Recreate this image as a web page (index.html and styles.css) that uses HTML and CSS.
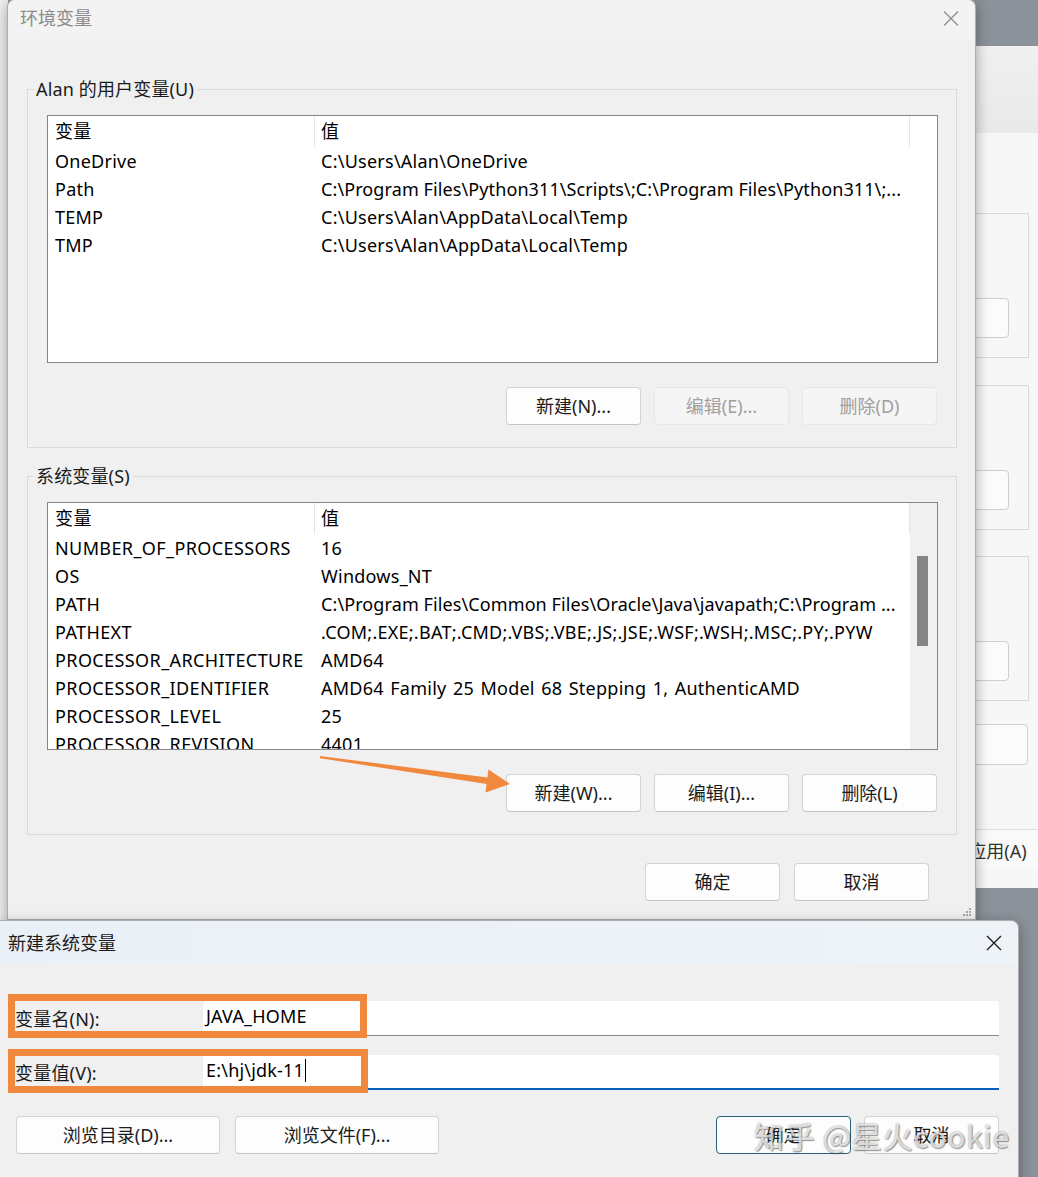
FILE: index.html
```html
<!DOCTYPE html>
<html lang="zh-CN">
<head>
<meta charset="utf-8">
<title>环境变量</title>
<link rel="stylesheet" href="styles.css">
</head>
<body>
<div class="desktop">
  <div class="bgwin-left"></div>
  <div class="bgwin">
    <div class="bgwin-head"></div>
    <div class="bgwin-body">
      <div class="bggroup g1"><div class="bgbtn"></div></div>
      <div class="bggroup g2"><div class="bgbtn"></div></div>
      <div class="bggroup g3"><div class="bgbtn"></div></div>
      <div class="bgbtn wide"></div>
      <div class="bgapply">应用(A)</div>
    </div>
  </div>

  <div class="dialog envdlg">
    <div class="titlebar">
      <span class="title">环境变量</span>
      <svg class="close" width="16" height="17" viewBox="0 0 16 17"><path d="M1 1.5L15 15.5M15 1.5L1 15.5" stroke="#8e8e8e" stroke-width="1.3" fill="none"/></svg>
    </div>
    <div class="dlgbody">
      <div class="group">
        <div class="legend">Alan 的用户变量(U)</div>
        <div class="list">
          <div class="lrow lhead"><span class="c1">变量</span><span class="c2">值</span></div>
          <div class="lrow"><span class="c1">OneDrive</span><span class="c2">C:\Users\Alan\OneDrive</span></div>
          <div class="lrow"><span class="c1">Path</span><span class="c2 tight">C:\Program Files\Python311\Scripts\;C:\Program Files\Python311\;...</span></div>
          <div class="lrow"><span class="c1">TEMP</span><span class="c2">C:\Users\Alan\AppData\Local\Temp</span></div>
          <div class="lrow"><span class="c1">TMP</span><span class="c2">C:\Users\Alan\AppData\Local\Temp</span></div>
        </div>
        <div class="btnrow">
          <div class="btn">新建(N)...</div>
          <div class="btn disabled">编辑(E)...</div>
          <div class="btn disabled">删除(D)</div>
        </div>
      </div>

      <div class="group">
        <div class="legend">系统变量(S)</div>
        <div class="list sys">
          <div class="lbody">
            <div class="lrow lhead"><span class="c1">变量</span><span class="c2">值</span></div>
            <div class="lrow"><span class="c1">NUMBER_OF_PROCESSORS</span><span class="c2">16</span></div>
            <div class="lrow"><span class="c1">OS</span><span class="c2">Windows_NT</span></div>
            <div class="lrow"><span class="c1">PATH</span><span class="c2 tight">C:\Program Files\Common Files\Oracle\Java\javapath;C:\Program ...</span></div>
            <div class="lrow"><span class="c1">PATHEXT</span><span class="c2">.COM;.EXE;.BAT;.CMD;.VBS;.VBE;.JS;.JSE;.WSF;.WSH;.MSC;.PY;.PYW</span></div>
            <div class="lrow"><span class="c1">PROCESSOR_ARCHITECTURE</span><span class="c2">AMD64</span></div>
            <div class="lrow"><span class="c1">PROCESSOR_IDENTIFIER</span><span class="c2">AMD64 Family 25 Model 68 Stepping 1, AuthenticAMD</span></div>
            <div class="lrow"><span class="c1">PROCESSOR_LEVEL</span><span class="c2">25</span></div>
            <div class="lrow"><span class="c1">PROCESSOR_REVISION</span><span class="c2">4401</span></div>
          </div>
          <div class="scrollbar"><div class="thumb"></div></div>
        </div>
        <div class="btnrow">
          <div class="btn">新建(W)...</div>
          <div class="btn">编辑(I)...</div>
          <div class="btn">删除(L)</div>
        </div>
      </div>

      <div class="okrow">
        <div class="btn">确定</div>
        <div class="btn">取消</div>
      </div>
    </div>
    <svg class="grip" width="10" height="10" viewBox="0 0 10 10"><g fill="#a8a8a8"><rect x="7" y="1" width="2" height="2"/><rect x="4" y="4" width="2" height="2"/><rect x="7" y="4" width="2" height="2"/><rect x="1" y="7" width="2" height="2"/><rect x="4" y="7" width="2" height="2"/><rect x="7" y="7" width="2" height="2"/></g></svg>
  </div>

  <div class="dialog newdlg">
    <div class="titlebar nt">
      <span class="title">新建系统变量</span>
      <svg class="close" width="16" height="16" viewBox="0 0 16 16"><path d="M1 1L15 15M15 1L1 15" stroke="#1a1a1a" stroke-width="1.3" fill="none"/></svg>
    </div>
    <div class="newbody">
      <div class="field">
        <div class="flabel">变量名(N):</div>
        <div class="finput">JAVA_HOME</div>
      </div>
      <div class="field">
        <div class="flabel">变量值(V):</div>
        <div class="finput focus">E:\hj\jdk-11<span class="caret"></span></div>
      </div>
      <div class="newbtns">
        <div class="btn wide">浏览目录(D)...</div>
        <div class="btn wide">浏览文件(F)...</div>
        <div class="spacer"></div>
        <div class="rbtns">
          <div class="btn default">确定</div>
          <div class="btn">取消</div>
        </div>
      </div>
    </div>
    <svg class="grip" width="10" height="10" viewBox="0 0 10 10"><g fill="#a8a8a8"><rect x="7" y="1" width="2" height="2"/><rect x="4" y="4" width="2" height="2"/><rect x="7" y="4" width="2" height="2"/><rect x="1" y="7" width="2" height="2"/><rect x="4" y="7" width="2" height="2"/><rect x="7" y="7" width="2" height="2"/></g></svg>
  </div>

  <svg class="annot" width="1038" height="1177" viewBox="0 0 1038 1177">
    <polygon points="320,756 487.4,777.4 488.5,769.5 510,784 485.5,792.5 486.6,784 320,758.2" fill="#f0893d"/>
  </svg>
  <div class="hl hl1"></div>
  <div class="hl hl2"></div>
  <div class="watermark">知乎 @星火cookie</div>
</div>
</body>
</html>
```

FILE: styles.css
```css
* { box-sizing: border-box; }
html, body { margin: 0; padding: 0; }
body {
  width: 1038px;
  height: 1177px;
  overflow: hidden;
  background: #8c929a;
  font-family: "Noto Sans", "Noto Sans CJK SC", sans-serif;
  font-size: 18px;
  color: #1a1a1a;
}
.desktop { position: relative; width: 1038px; height: 1177px; overflow: hidden; }

/* background windows */
.bgwin-left { position: absolute; left: -60px; top: 0; width: 68px; height: 921px; background: #f0f0f0; }
.bgwin {
  position: absolute; left: 930px; top: 46px; width: 120px; height: 842px;
  background: #f7f7f7; display: flex; flex-direction: column;
}
.bgwin-head { flex: none; height: 87px; background: linear-gradient(#f0f0f0, #e9e9e9); }
.bgwin-body { display: flex; flex-direction: column; align-items: flex-end; padding-right: 21px; }
.bggroup {
  width: 100px; height: 145px; border: 1px solid #d9d9d9;
  display: flex; flex-direction: column; align-items: flex-end; padding-right: 19px;
}
.g1 { margin-top: 80px; }
.g2 { margin-top: 27px; }
.g3 { margin-top: 26px; }
.bgbtn { width: 80px; height: 40px; border: 1px solid #cfcfcf; border-radius: 4px; background: #fbfbfb; margin-top: 84px; }
.bgbtn.wide { width: 100px; height: 41px; margin-top: 23px; margin-right: 1px; }
.bgapply {
  align-self: flex-start; margin-top: 64px; width: 135px; height: 40px;
  background: #fafafa; border-top: 1px solid #dedede;
  display: flex; align-items: center; justify-content: center; color: #333;
}

/* dialogs */
.dialog {
  position: absolute; background: #f0f0f0;
  border: 1px solid rgba(0, 0, 0, 0.28);
  box-shadow: 0 4px 14px rgba(0, 0, 0, 0.35);
}
.envdlg { left: 7px; top: -1px; width: 969px; height: 921px; border-radius: 8px 8px 0 0; }
.titlebar {
  height: 40px; background: #f3f3f3; border-radius: 8px 8px 0 0;
  display: flex; align-items: center; justify-content: space-between;
  padding: 0 16px 4px 12px;
}
.title { line-height: 24px; color: #8b8b8b; }
.close { display: block; flex: none; }

.dlgbody { padding: 49px 18px 0 19px; }
.group { border: 1px solid #dadada; padding: 0 18px 22px 19px; }
.group + .group { margin-top: 28px; }
.legend {
  width: max-content; margin: -13px 0 0 -13px; padding: 0 3px 0 2px;
  background: #f0f0f0; line-height: 24px; color: #1a1a1a; letter-spacing: 0.15px;
}
.list { height: 248px; border: 1px solid #858585; background: #fff; overflow: hidden; margin-top: 14px; }
.list.sys { display: flex; }
.lbody { flex: 1; min-width: 0; }
.scrollbar { flex: none; width: 27px; background: #f0f0f0; padding: 53px 0 0 7px; }
.thumb { width: 11px; height: 90px; background: #858585; }
.lrow {
  display: flex; height: 28px; line-height: 28px; white-space: nowrap; color: #000;
  letter-spacing: 0.25px; word-spacing: 1.5px;
}
.lhead { height: 31px; line-height: 31px; }
.c1 { flex: none; width: 267px; padding-left: 7px; overflow: hidden; }
.sys .c1 { letter-spacing: 0.4px; }
.c2 { flex: none; width: 595px; padding-left: 6px; overflow: hidden; text-overflow: ellipsis; }
.c2.tight { letter-spacing: 0.1px; word-spacing: 0; }
.lhead .c1, .lhead .c2 { border-right: 1px solid #e5e5e5; }

.btn {
  flex: none; width: 135px; height: 38px;
  border: 1px solid #d3d3d3; border-bottom-color: #c4c4c4; border-radius: 4px;
  background: #fdfdfd; color: #1b1b1b;
  display: flex; align-items: center; justify-content: center;
  line-height: 24px; white-space: nowrap;
}
.btn.disabled { background: #f5f5f5; border-color: #e7e7e7; color: #a0a0a0; }
.btnrow { display: flex; justify-content: flex-end; gap: 13px; margin-top: 24px; padding-right: 1px; }
.okrow { display: flex; justify-content: flex-end; gap: 14px; margin-top: 28px; padding-right: 28px; }
.grip { position: absolute; right: 3px; bottom: 2px; }

.newdlg { left: -1px; top: 920px; width: 1020px; height: 270px; border-radius: 0 8px 0 0; }
.titlebar.nt { height: 43px; background: linear-gradient(90deg, #eaf0f7, #eef3f8); border-radius: 0 8px 0 0; padding: 0 16px 0 8px; }
.titlebar.nt .title { color: #1a1a1a; }
.newbody { padding: 37px 19px 0 15px; }
.field { display: flex; align-items: center; height: 35px; }
.field + .field { margin-top: 19px; }
.flabel { flex: none; width: 188px; line-height: 24px; letter-spacing: 0.2px; }
.finput {
  flex: 1; height: 35px; background: #fff; border-bottom: 1px solid #8a8a8a;
  border-radius: 4px 4px 0 0; padding: 0 0 4px 3px;
  display: flex; align-items: center; line-height: 24px; color: #000; letter-spacing: 0.2px;
}
.finput.focus { border-bottom: 2px solid #005fb8; padding-bottom: 3px; }
.caret { display: inline-block; width: 1px; height: 23px; background: #000; margin-left: 1px; }
.newbtns { display: flex; gap: 15px; margin-top: 26px; padding-left: 1px; }
.btn.wide { width: 204px; }
.spacer { flex: 1; }
.rbtns { display: flex; gap: 13px; }
.btn.default { border-color: #2a5f80; }

/* annotations */
.annot { position: absolute; left: 0; top: 0; pointer-events: none; }
.hl { position: absolute; border: 7px solid #f0893d; }
.hl1 { left: 8px; top: 994px; width: 359px; height: 44px; }
.hl2 { left: 8px; top: 1049px; width: 360px; height: 44px; }
.watermark {
  position: absolute; left: 754px; top: 1115px;
  font-family: "Noto Sans CJK SC", sans-serif; font-size: 30px; line-height: 40px;
  letter-spacing: 0.7px;
  color: rgba(255, 255, 255, 0.72);
  text-shadow: 0 0 2px rgba(0, 0, 0, 0.45), 1px 1px 1px rgba(90, 90, 90, 0.5);
  white-space: nowrap;
}
```
